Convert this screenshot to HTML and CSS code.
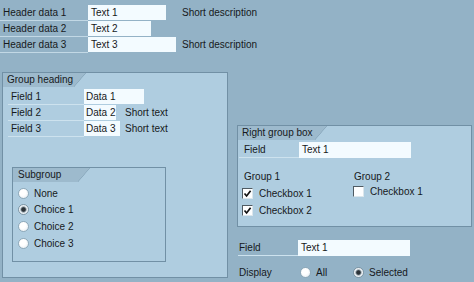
FILE: index.html
```html
<!DOCTYPE html>
<html lang="en">
<head>
    <meta charset="UTF-8">
    <title>Screen</title>
    <link rel="stylesheet" href="styles.css">
</head>
<body>
    <div class="header">
        <div class="hrow">
            <span class="hlabel">Header data 1</span>
            <span class="hcell"><span class="input w78">Text 1</span></span>
            <span class="desc">Short description</span>
        </div>
        <div class="hrow">
            <span class="hlabel">Header data 2</span>
            <span class="hcell"><span class="input w63">Text 2</span></span>
        </div>
        <div class="hrow">
            <span class="hlabel">Header data 3</span>
            <span class="hcell"><span class="input w88">Text 3</span></span>
            <span class="desc">Short description</span>
        </div>
    </div>

    <div class="main">
        <div class="box left-box">
            <div class="tab tab-group">Group heading</div>
            <div class="fields">
                <div class="frow">
                    <span class="flabel">Field 1</span>
                    <span class="input w60">Data 1</span>
                </div>
                <div class="frow">
                    <span class="flabel">Field 2</span>
                    <span class="fcell"><span class="input w32">Data 2</span></span>
                    <span class="short">Short text</span>
                </div>
                <div class="frow">
                    <span class="flabel">Field 3</span>
                    <span class="fcell"><span class="input w36">Data 3</span></span>
                    <span class="short">Short text</span>
                </div>
            </div>
            <div class="box subgroup">
                <div class="tab tab-sub">Subgroup</div>
                <ul class="radios">
                    <li><span class="radio"></span>None</li>
                    <li><span class="radio on"></span>Choice 1</li>
                    <li><span class="radio"></span>Choice 2</li>
                    <li><span class="radio"></span>Choice 3</li>
                </ul>
            </div>
        </div>

        <div class="right-col">
            <div class="box right-box">
                <div class="tab tab-right">Right group box</div>
                <div class="rrow">
                    <span class="rlabel">Field</span>
                    <span class="input w112">Text 1</span>
                </div>
                <div class="groups">
                    <div class="grp grp1">
                        <div class="gtitle">Group 1</div>
                        <div class="check"><span class="cb on"><svg width="9" height="9" viewBox="0 0 9 9"><path d="M1.5 4.5 L3.6 7 L7.6 1.8" fill="none" stroke="#111" stroke-width="1.7"/></svg></span>Checkbox 1</div>
                        <div class="check"><span class="cb on"><svg width="9" height="9" viewBox="0 0 9 9"><path d="M1.5 4.5 L3.6 7 L7.6 1.8" fill="none" stroke="#111" stroke-width="1.7"/></svg></span>Checkbox 2</div>
                    </div>
                    <div class="grp grp2">
                        <div class="gtitle">Group 2</div>
                        <div class="check"><span class="cb"></span>Checkbox 1</div>
                    </div>
                </div>
            </div>

            <div class="rrow bottom-field">
                <span class="rlabel">Field</span>
                <span class="input w112">Text 1</span>
            </div>
            <div class="display">
                <span class="dlabel">Display</span>
                <span class="opt opt-all"><span class="radio"></span>All</span>
                <span class="opt"><span class="radio on"></span>Selected</span>
            </div>
        </div>
    </div>
</body>
</html>
```

FILE: styles.css
```css
*{
    margin: 0;
    padding: 0;
    box-sizing: border-box;
}
ul{
    list-style: none;
}
body{
    width: 474px;
    height: 282px;
    overflow: hidden;
    background: #93b2c6;
    font-family: "Liberation Sans", Arial, sans-serif;
    font-size: 10px;
    color: #16191b;
    white-space: nowrap;
}

/* header rows */
.header{
    padding-top: 5px;
}
.hrow{
    display: flex;
    height: 16px;
}
.hlabel{
    width: 88px;
    height: 16px;
    line-height: 15px;
    padding-left: 3px;
    border-bottom: 1px solid #c2d8e5;
}
.hcell{
    width: 94px;
}
.input{
    display: block;
    height: 15px;
    line-height: 15px;
    padding-left: 3px;
    background: #f3fbff;
    color: #16191b;
}
.w78{ width: 78px; }
.w63{ width: 63px; }
.w88{ width: 88px; }
.w60{ width: 60px; }
.w32{ width: 32px; }
.w36{ width: 36px; }
.w112{ width: 112px; }
.desc{
    line-height: 15px;
}

/* group boxes */
.main{
    display: flex;
    gap: 9px;
    margin-top: 19px;
    padding-left: 2px;
}
.box{
    background: #afcde0;
    border: 1px solid #7190a5;
}
.left-box{
    width: 226px;
    height: 206px;
}
.tab{
    position: relative;
    height: 14px;
    line-height: 13px;
    padding-left: 4px;
    background: #9dbacd;
    clip-path: polygon(0 0, 100% 0, calc(100% - 12px) 100%, 0 100%);
}
.tab::after{
    content: '';
    position: absolute;
    right: 0;
    top: 0;
    width: 12px;
    height: 14px;
    background: linear-gradient(to bottom right, transparent calc(50% - 0.8px), #7c9bb0 50%, transparent calc(50% + 0.8px));
}
.tab-group{ width: 83px; }
.tab-sub{ width: 77px; padding-left: 5px; }
.tab-right{ width: 89px; }

.fields{
    margin-top: 2px;
    padding-left: 5px;
}
.frow{
    display: flex;
    height: 16px;
}
.flabel{
    width: 76px;
    height: 16px;
    line-height: 15px;
    padding-left: 3px;
    border-bottom: 1px solid #cde2ee;
}
.frow .input{
    padding-left: 2px;
}
.fcell{
    width: 41px;
}
.short{
    line-height: 15px;
}

.subgroup{
    width: 154px;
    height: 95px;
    margin: 30px 0 0 9px;
}
.radios{
    margin-top: 3px;
    padding-left: 5px;
}
.radios li{
    display: flex;
    align-items: center;
    height: 16.6px;
}
.radio{
    display: inline-block;
    width: 11px;
    height: 11px;
    margin-right: 5px;
    border-radius: 50%;
    border: 1px solid #8fa9b9;
    background: radial-gradient(circle at 40% 35%, #ffffff 40%, #dfe8ee 100%);
}
.radio.on{
    border-color: #7d95a4;
    background: radial-gradient(circle, #2c3338 0, #2c3338 1.8px, #8d9ba4 2.6px, #e9eff3 3.6px, #ffffff 100%);
}

/* right column */
.right-col{
    width: 235px;
    padding-top: 53px;
}
.right-box{
    height: 102px;
}
.rrow{
    display: flex;
    height: 16px;
    margin-top: 2px;
}
.rlabel{
    width: 60px;
    height: 16px;
    line-height: 15px;
    padding-left: 5px;
    border-bottom: 1px solid #cde2ee;
}
.right-box .rlabel{
    margin-left: 1px;
}
.rrow .input{
    height: 16px;
}
.groups{
    display: flex;
    margin-top: 11px;
    padding-left: 4px;
}
.grp1{
    width: 111px;
}
.gtitle{
    height: 16px;
    line-height: 16px;
    padding-left: 2px;
}
.grp2 .gtitle{
    padding-left: 1px;
}
.check{
    display: flex;
    align-items: center;
    height: 17px;
}
.grp2 .check{
    margin-top: -2px;
}
.cb{
    display: inline-flex;
    align-items: center;
    justify-content: center;
    width: 11px;
    height: 11px;
    margin-right: 6px;
    background: #fdfeff;
    border: 1px solid;
    border-color: #4f5b63 #dbe6ec #dbe6ec #4f5b63;
}

.bottom-field{
    margin-top: 13px;
}
.bottom-field .rlabel{
    margin-left: 1px;
    padding-left: 1px;
}
.display{
    display: flex;
    align-items: center;
    height: 18px;
    margin-top: 7px;
    padding-left: 2px;
}
.dlabel{
    width: 61px;
}
.opt{
    display: flex;
    align-items: center;
}
.opt-all{
    width: 53px;
}
```
